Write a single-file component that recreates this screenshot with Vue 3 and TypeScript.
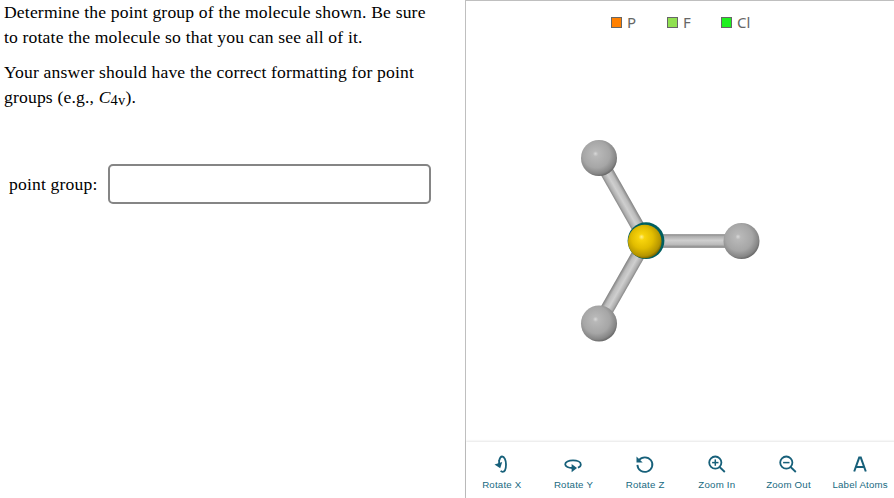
<script setup lang="ts">
import { ref } from 'vue'

interface Point {
  x: number
  y: number
}

const answer = ref('')

const legend = [
  { symbol: 'P', color: '#ff8000' },
  { symbol: 'F', color: '#90e050' },
  { symbol: 'Cl', color: '#1ff01f' },
]

const center: Point = { x: 646, y: 241 }
const atoms: Point[] = [
  { x: 599, y: 158 },
  { x: 741.5, y: 241 },
  { x: 599, y: 323.5 },
]

const tools = [
  { id: 'rotate-x', label: 'Rotate X' },
  { id: 'rotate-y', label: 'Rotate Y' },
  { id: 'rotate-z', label: 'Rotate Z' },
  { id: 'zoom-in', label: 'Zoom In' },
  { id: 'zoom-out', label: 'Zoom Out' },
  { id: 'label', label: 'Label Atoms' },
]

function bondLength(atom: Point) {
  return Math.hypot(atom.x - center.x, atom.y - center.y)
}

function bondTransform(atom: Point) {
  const angle = (Math.atan2(atom.y - center.y, atom.x - center.x) * 180) / Math.PI
  return `translate(${center.x} ${center.y}) rotate(${angle})`
}
</script>

<template>
  <div class="page">
    <section class="question">
      <p>Determine the point group of the molecule shown. Be sure<br />to rotate the molecule so that you can see all of it.</p>
      <p>
        Your answer should have the correct formatting for point<br />groups (e.g., <i>C</i><span class="sub">4v</span>).
      </p>
      <div class="answer">
        <label for="point-group">point group:</label>
        <input id="point-group" v-model.trim="answer" type="text" />
      </div>
    </section>

    <section class="viewer">
      <div class="legend">
        <div v-for="item in legend" :key="item.symbol" class="legend-item">
          <span class="swatch" :style="{ backgroundColor: item.color }"></span>
          <span>{{ item.symbol }}</span>
        </div>
      </div>

      <svg class="molecule" viewBox="466 41 428 400">
        <defs>
          <radialGradient id="gray-atom" cx="0.45" cy="0.42" r="0.62" fx="0.4" fy="0.38">
            <stop offset="0" stop-color="#d8d8d8" />
            <stop offset="0.12" stop-color="#b8b8b8" />
            <stop offset="0.6" stop-color="#a6a6a6" />
            <stop offset="0.85" stop-color="#868686" />
            <stop offset="1" stop-color="#585858" />
          </radialGradient>
          <radialGradient id="gold-atom" cx="0.45" cy="0.42" r="0.64" fx="0.4" fy="0.36">
            <stop offset="0" stop-color="#fff08a" />
            <stop offset="0.14" stop-color="#f8d40c" />
            <stop offset="0.5" stop-color="#e2bd00" />
            <stop offset="0.82" stop-color="#b49400" />
            <stop offset="1" stop-color="#4f4500" />
          </radialGradient>
          <linearGradient id="bond" x1="0" y1="0" x2="0" y2="1">
            <stop offset="0" stop-color="#858585" />
            <stop offset="0.15" stop-color="#acacac" />
            <stop offset="0.45" stop-color="#cfcfcf" />
            <stop offset="0.75" stop-color="#bcbcbc" />
            <stop offset="1" stop-color="#808080" />
          </linearGradient>
        </defs>
        <rect
          v-for="(atom, i) in atoms"
          :key="`bond-${i}`"
          x="0"
          y="-6.8"
          :width="bondLength(atom)"
          height="13.6"
          fill="url(#bond)"
          :transform="bondTransform(atom)" />
        <circle v-for="(atom, i) in atoms" :key="`atom-${i}`" :cx="atom.x" :cy="atom.y" r="18" fill="url(#gray-atom)" />
        <circle :cx="center.x" :cy="center.y - 0.3" r="18.4" fill="#005f60" />
        <circle :cx="center.x - 1.2" :cy="center.y + 0.5" r="16.8" fill="url(#gold-atom)" />
      </svg>

      <div class="toolbar">
        <button v-for="tool in tools" :key="tool.id" type="button">
          <svg class="icon" viewBox="0 0 20 20">
            <template v-if="tool.id === 'rotate-x'">
              <path d="M7.2 5.5C7.8 2.8 8.8 1.5 10.1 1.5c2.2 0 3.9 3.7 3.9 8s-1.5 7.3-3.4 7.3c-.8 0-1.4-.4-1.9-1.1" />
              <path d="M7.1 5v5" />
              <path class="solid" d="M2.5 9.5 10.2 6.9 8.2 13.3z" />
            </template>
            <template v-else-if="tool.id === 'rotate-y'">
              <path d="M10 13C5.4 13.1 2.2 11.5 2.2 9.3 2.2 7.1 5.5 5.4 10 5.4s7.8 1.7 7.8 4c0 1.5-1.1 2.6-2.9 3.2" />
              <path class="solid" d="M8.6 8.9 14 12.9 8.6 17.2z" />
            </template>
            <template v-else-if="tool.id === 'rotate-z'">
              <path d="M3.9 5.2A7.5 7.3 0 1 1 2.4 9.9" />
              <path class="solid" d="M1.5 1.4v6.2h6.2z" />
            </template>
            <template v-else-if="tool.id === 'label'">
              <path class="letter" d="M4.2 16.5 9.2 2.6h1.6L15.8 16.5M6.1 11.9h7.8" />
            </template>
            <template v-else>
              <circle cx="8.3" cy="7.6" r="6.1" />
              <path d="M12.6 12 17.8 17" />
              <path class="sign" d="M5.1 7.6h6.4" />
              <path v-if="tool.id === 'zoom-in'" class="sign" d="M8.3 4.4v6.4" />
            </template>
          </svg>
          <span>{{ tool.label }}</span>
        </button>
      </div>
    </section>
  </div>
</template>

<style>
body {
  background: #fff;
  overflow: hidden;
}
</style>

<style scoped>
.page {
  display: flex;
  width: 894px;
  height: 498px;
  overflow: hidden;
}
.question {
  box-sizing: border-box;
  width: 465px;
  flex-shrink: 0;
  padding-left: 4px;
  color: #000;
  font-family: 'Liberation Serif', serif;
  font-size: 17.6px;
  line-height: 25px;
  letter-spacing: 0.165px;
  white-space: nowrap;
}
.question p {
  margin: 0 0 10px;
}
.sub {
  position: relative;
  top: 2px;
  font-size: 14.5px;
  line-height: 0;
}
.answer {
  display: flex;
  align-items: center;
  gap: 10px;
  margin-top: 54px;
  padding-left: 5px;
}
.answer label {
  width: 89px;
}
.answer input {
  box-sizing: border-box;
  width: 323px;
  height: 40px;
  padding: 0 8px;
  border: 2px solid #858585;
  border-radius: 5px;
  background: #fff;
  font: inherit;
  outline: none;
}
.viewer {
  display: flex;
  flex-direction: column;
  flex-shrink: 0;
  box-sizing: border-box;
  width: 431px;
  height: 498px;
  border-top: 1px solid #bfbfbf;
  border-left: 1px solid #bfbfbf;
}
.legend {
  display: flex;
  align-items: flex-start;
  gap: 20px;
  box-sizing: border-box;
  height: 40px;
  padding: 11px 0 0 145px;
  color: #666;
  font-family: 'Noto Sans', sans-serif;
  font-size: 15px;
  line-height: 20px;
}
.legend-item {
  display: flex;
  align-items: center;
  gap: 5px;
  width: 35px;
}
.legend-item:first-child {
  width: 36px;
}
.legend-item:nth-child(2) {
  width: 34px;
}
.swatch {
  box-sizing: border-box;
  width: 11px;
  height: 11px;
  border: 1px solid #666;
}
.molecule {
  display: block;
  width: 428px;
  height: 400px;
}
.toolbar {
  display: grid;
  grid-template-columns: repeat(6, 1fr);
  height: 56px;
  margin-top: 1px;
  box-shadow: 0 -1px 2px rgba(0, 0, 0, 0.1);
}
.toolbar button {
  display: flex;
  flex-direction: column;
  align-items: center;
  min-width: 0;
  padding: 13px 0 0;
  border: 0;
  background: none;
  color: #17697f;
  font-family: 'Liberation Sans', Arial, sans-serif;
  font-size: 9.7px;
  line-height: 12px;
  letter-spacing: 0.2px;
  white-space: nowrap;
  cursor: pointer;
}
.icon {
  width: 20px;
  height: 20px;
  margin-bottom: 4px;
  fill: none;
  stroke: #17607a;
  stroke-width: 1.8;
}
.icon .solid {
  fill: #17607a;
  stroke: none;
}
.icon .sign {
  stroke-width: 1.5;
}
.icon .letter {
  stroke-width: 2;
}
</style>
